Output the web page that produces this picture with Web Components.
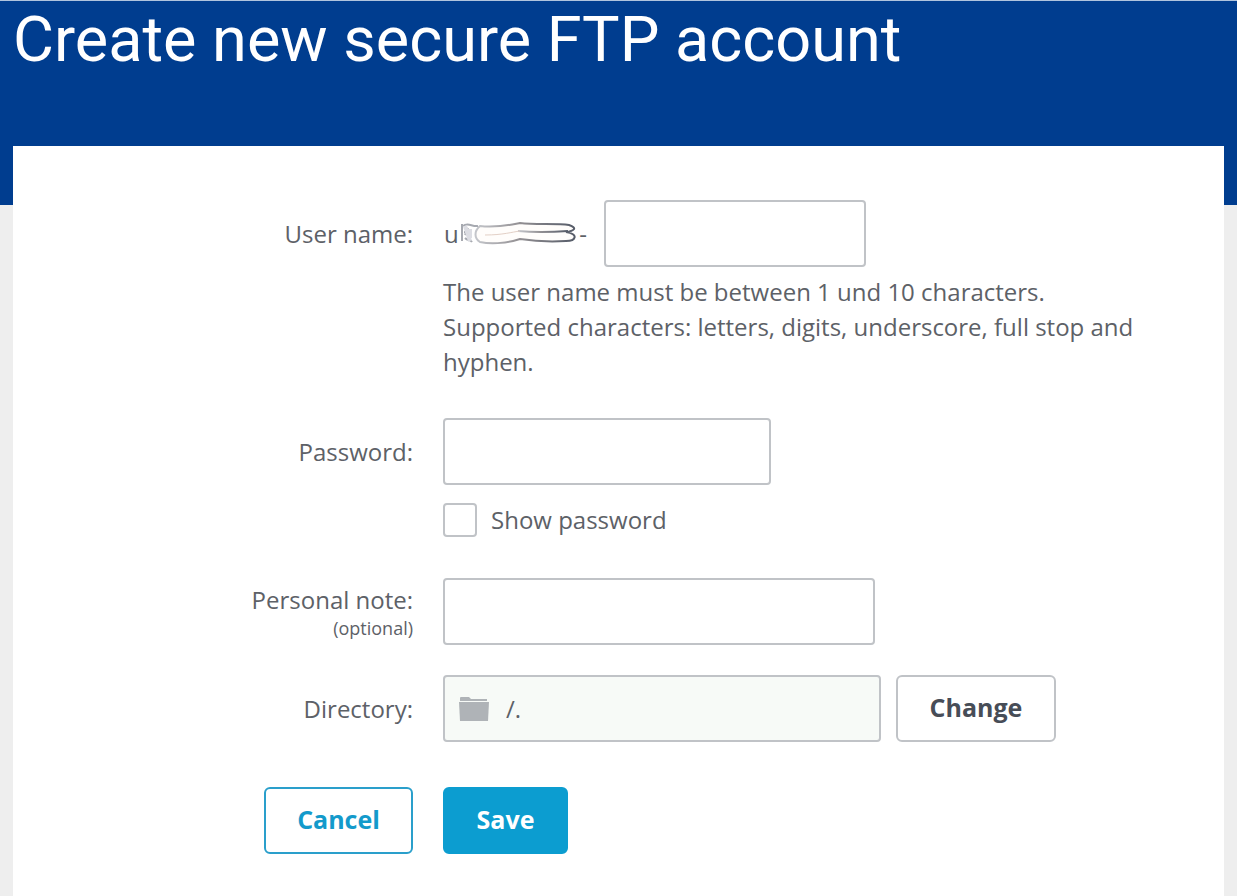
<!DOCTYPE html>
<html lang="en">
<head>
<meta charset="utf-8">
<title>Create new secure FTP account</title>
<style>
  body { margin: 0; background: #eee; font-family: "Open Sans", "Noto Sans", sans-serif; font-size: 24px; line-height: 36px; color: #5d6167; }
</style>
</head>
<body>
<account-page>
  <h1 slot="title">Create new secure FTP account</h1>
  <account-form></account-form>
</account-page>

<script>
const shadow = (host, html) => { host.attachShadow({ mode: "open" }).innerHTML = html; };

customElements.define("account-page", class extends HTMLElement {
  constructor() {
    super();
    shadow(this, `
      <style>
        :host { display: flex; flex-direction: column; min-height: 100vh; box-sizing: border-box; padding: 0 13px;
          background: linear-gradient(#b0c4de 0 1px, #003d8f 1px 205px, #eee 205px); }
        header { height: 146px; }
        ::slotted(h1) { margin: 0; padding-top: 2px; color: #fff; font: 400 63px/76px Roboto, sans-serif; }
        main { flex: 1; background: #fff; }
      </style>
      <header><slot name="title"></slot></header>
      <main><slot></slot></main>`);
  }
});

customElements.define("form-row", class extends HTMLElement {
  constructor() {
    super();
    shadow(this, `
      <style>
        :host { display: grid; grid-template-columns: minmax(0, 4fr) minmax(0, 7fr); column-gap: 30px; align-items: start; }
        .label { display: flex; flex-direction: column; align-items: flex-end; justify-content: center; min-height: 67px; text-align: right; }
      </style>
      <div class="label"><slot name="label"></slot></div>
      <div><slot></slot></div>`);
  }
});

customElements.define("redacted-id", class extends HTMLElement {
  constructor() {
    super();
    shadow(this, `
      <style>
        :host { display: flex; align-items: center; justify-content: space-between; width: 144px; padding-left: 1px; box-sizing: border-box; }
        svg { display: block; width: 118px; height: 28px; }
      </style>
      <span>u</span>
      <svg viewBox="0 0 118 28" fill="none" aria-hidden="true">
        <defs>
          <filter id="soft" x="-5%" y="-20%" width="110%" height="140%"><feGaussianBlur stdDeviation="0.6"/></filter>
          <linearGradient id="ink"><stop offset="0" stop-color="#c4c6cb"/><stop offset=".45" stop-color="#928f92"/><stop offset="1" stop-color="#555b68"/></linearGradient>
        </defs>
        <g filter="url(#soft)" stroke="url(#ink)" stroke-width="2">
          <path d="M20 6C36 8 50 5 60 3C75 5 97 3 109 5C118 8 114 11 106 12C119 14 116 21 106 21C89 22 73 21 60 19C45 24 29 24 20 22C14 18 14 11 20 6Z" fill="#fffdfb"/>
          <path d="M58 11C78 13 95 12 108 11"/>
          <path d="M25 15C43 15 52 12 60 11" stroke="#e3d0c6" stroke-width="1"/>
          <path d="M2 4V21M3 6C8 2 12 7 18 6M4 12H10M5 18C8 21 10 19 12 22M8 8L5 15" stroke="#a6a9b0"/>
          <path d="M5 6L10 21M10 9V18" stroke="#dcdde3" stroke-width="4"/>
        </g>
      </svg>
      <span>-</span>`);
  }
});

customElements.define("folder-icon", class extends HTMLElement {
  constructor() {
    super();
    shadow(this, `
      <style>:host { display: block; } svg { display: block; width: 32px; height: 26px; }</style>
      <svg viewBox="0 0 32 26" fill="#afb3b7" aria-hidden="true">
        <path d="M2 5V2Q2 1 3 1H11L13 3H29V5Z"/>
        <path d="M1 6H31L30 25H2Z"/>
      </svg>`);
  }
});

customElements.define("account-form", class extends HTMLElement {
  constructor() {
    super();
    shadow(this, `
      <style>
        :host { display: block; }
        form { display: flex; flex-direction: column; padding: 54px 81px 42px 0; }
        * { box-sizing: border-box; }
        label, p { margin: 0; }
        input[type=text], input[type=password] { display: block; max-width: 100%; height: 67px; margin: 0; padding: 0 16px;
          border: 2px solid #c0c3c7; border-radius: 4px; background: #fff; color: inherit; font: inherit; }
        input#user { width: 262px; }
        input#pass { width: 328px; }
        input#note { width: 432px; }
        small { padding-bottom: 4px; font-size: 18px; line-height: 20px; }
        .inline { display: flex; align-items: center; }
        .user { gap: 17px; }
        .help { margin: 7px 0 39px; line-height: 35px; }
        .check { gap: 14px; margin: 17px 0 40px; }
        input[type=checkbox] { appearance: none; width: 34px; height: 34px; margin: 0; border: 2px solid #c0c3c7; border-radius: 4px; background: #fff; }
        input[type=checkbox]:checked { background: #0c9dd0; }
        .directory-row { margin: 30px 0 45px; }
        .directory { gap: 15px; }
        .path { display: grid; grid-template-columns: 62px 1fr; align-items: center; width: 438px; }
        .path input { grid-area: 1 / 1 / 2 / 3; width: 100%; padding-left: 61px; background: #f7faf7; }
        folder-icon { grid-area: 1 / 1; z-index: 1; margin-left: 15px; }
        button { height: 67px; padding: 0 0 3px; border: 2px solid #c0c3c7; border-radius: 6px; background: #fff; color: #474d57; font: 700 25px/36px "Open Sans", sans-serif; }
        .change { width: 160px; }
        .cancel { width: 149px; border-color: #2a9fcb; color: #139acb; }
        .save { width: 125px; border-color: #0c9dd0; background: #0c9dd0; color: #fff; }
      </style>
      <form>
        <form-row>
          <label slot="label" for="user">User name:</label>
          <div class="inline user"><redacted-id></redacted-id><input id="user" type="text"></div>
          <p class="help">The user name must be between 1 und 10 characters.<br>Supported characters: letters, digits, underscore, full stop and hyphen.</p>
        </form-row>
        <form-row>
          <label slot="label" for="pass">Password:</label>
          <input id="pass" type="password">
          <div class="inline check"><input id="show" type="checkbox"><label for="show">Show password</label></div>
        </form-row>
        <form-row>
          <label slot="label" for="note">Personal note:</label>
          <small slot="label">(optional)</small>
          <input id="note" type="text">
        </form-row>
        <form-row class="directory-row">
          <label slot="label" for="dir">Directory:</label>
          <div class="inline directory">
            <div class="path"><folder-icon></folder-icon><input id="dir" type="text" value="/." readonly></div>
            <button class="change" type="button">Change</button>
          </div>
        </form-row>
        <form-row>
          <button slot="label" class="cancel" type="button">Cancel</button>
          <button class="save" type="button">Save</button>
        </form-row>
      </form>`);
    const root = this.shadowRoot;
    root.getElementById("show").addEventListener("change", e => {
      root.getElementById("pass").type = e.target.checked ? "text" : "password";
    });
  }
});
</script>
</body>
</html>
